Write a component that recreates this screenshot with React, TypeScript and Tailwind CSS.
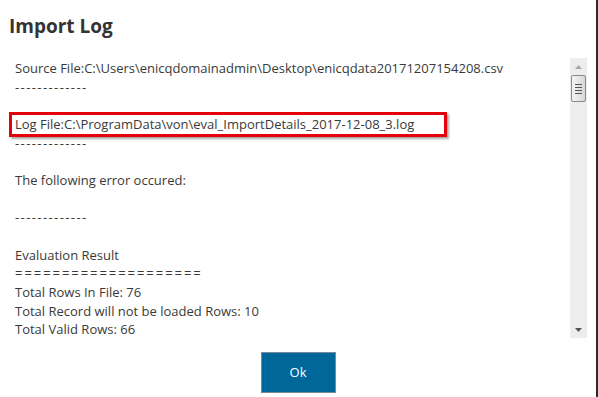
const lines: string[] = [
  "Source File:C:\\Users\\enicqdomainadmin\\Desktop\\enicqdata20171207154208.csv",
  "-------------",
  "",
  "LOG",
  "-------------",
  "",
  "The following error occured:",
  "",
  "-------------",
  "",
  "Evaluation Result",
  "====================",
  "Total Rows In File: 76",
  "Total Record will not be loaded Rows: 10",
  "Total Valid Rows: 66",
];

const ScrollBar = () => (
  <div className="w-[17px] h-[280px] bg-[#ededed] flex flex-col items-center">
    <div className="h-[17px] flex items-center justify-center">
      <svg width="7" height="4" viewBox="0 0 7 4">
        <path d="M0 4 L3.5 0 L7 4 Z" fill="#a8a8a8" />
      </svg>
    </div>
    <div className="w-[15px] h-[27px] border border-[#8a8a8a] rounded-[2px] bg-gradient-to-r from-[#f4f4f4] via-[#e6e6e6] to-[#d6d6d6] flex flex-col items-center justify-center gap-[2px]">
      <div className="w-[7px] h-px bg-[#555]" />
      <div className="w-[7px] h-px bg-[#555]" />
      <div className="w-[7px] h-px bg-[#555]" />
      <div className="w-[7px] h-px bg-[#555]" />
    </div>
    <div className="flex-1" />
    <div className="h-[17px] flex items-center justify-center">
      <svg width="7" height="4" viewBox="0 0 7 4">
        <path d="M0 0 L3.5 4 L7 0 Z" fill="#555" />
      </svg>
    </div>
  </div>
);

export default function App() {
  return (
    <div
      className="w-[598px] h-[397px] bg-white border-r-2 border-[#2a2a2a] text-[#3a3a3a] overflow-hidden"
      style={{ fontFamily: '"Open Sans", "Noto Sans", sans-serif' }}
    >
      <h1 className="pl-[9px] pt-[13px] text-[19px] leading-[26px] font-bold text-[#333]">
        Import Log
      </h1>
      <div className="flex mt-[19px] h-[280px]">
        <div className="flex-1 pl-[15px] pt-[1px] overflow-hidden text-[13px] leading-[18.65px]">
          {lines.map((l, i) =>
            l === "LOG" ? (
              <div
                key={i}
                className="-ml-[6px] pl-[3px] w-[438px] h-[25px] -my-[3px] border-[3px] border-[#e5000a] shadow-[2px_2px_2px_rgba(0,0,0,0.35)] flex items-center"
              >
                Log File:C:\ProgramData\von\eval_ImportDetails_2017-12-08_3.log
              </div>
            ) : (
              <div
                key={i}
                className={
                  l.startsWith("=")
                    ? "h-[18.65px] whitespace-pre tracking-[1.95px]"
                    : l.startsWith("-")
                      ? "h-[18.65px] whitespace-pre tracking-[1.4px]"
                      : "h-[18.65px] whitespace-pre"
                }
              >
                {l}
              </div>
            )
          )}
        </div>
        <div className="mr-[9px]">
          <ScrollBar />
        </div>
      </div>
      <div className="flex justify-center mt-[14px]">
        <button className="w-[75px] h-[41px] bg-[#00679a] border border-[#7a8a96] text-white text-[13px]">
          Ok
        </button>
      </div>
    </div>
  );
}
